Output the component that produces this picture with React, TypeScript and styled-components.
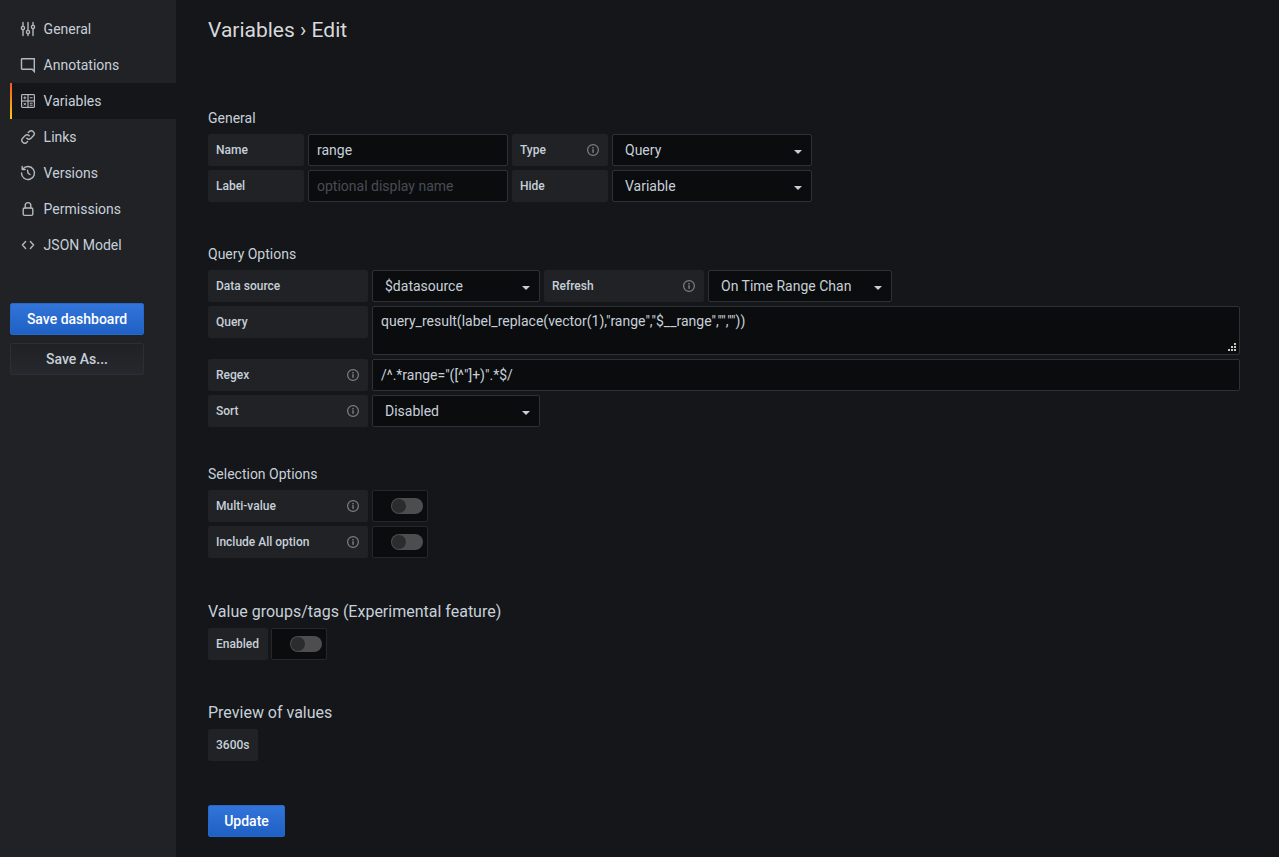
import React from 'react';
import styled, { createGlobalStyle } from 'styled-components';

const Global = createGlobalStyle`
  html, body { margin: 0; padding: 0; background: #141619; }
  body { font-family: Roboto, "Liberation Sans", sans-serif; font-size: 14px; color: #c7d0d9; }
  * { box-sizing: border-box; }
`;

const Page = styled.div`
  display: flex;
  width: 1279px;
  height: 857px;
  overflow: hidden;
`;
const Sidebar = styled.aside`
  width: 176px;
  flex: none;
  background: #202226;
  padding: 11px 0 0 10px;
  display: flex;
  flex-direction: column;
`;
const NavItem = styled.div<{ $active?: boolean }>`
  position: relative;
  height: 36px;
  display: flex;
  align-items: center;
  padding-left: 10px;
  gap: 7.6px;
  font-size: 14px;
  color: #c7d0d9;
  background: ${p => (p.$active ? '#141619' : 'transparent')};
  ${p => p.$active ? `&::before {
    content: '';
    position: absolute;
    left: 0; top: 0; bottom: 0;
    width: 2px;
    background: linear-gradient(180deg, #f05a28 0%, #fbca0a 100%);
  }` : ''}
  svg { width: 16px; height: 16px; flex: none; color: #b3b9c0; }
`;
const SideActions = styled.div`
  margin-top: 40px;
  width: 134px;
  display: flex;
  flex-direction: column;
  gap: 8px;
`;
const PrimaryButton = styled.button<{ $w?: number }>`
  height: 32px;
  width: ${p => (p.$w ? `${p.$w}px` : '100%')};
  border: 1px solid #2668c8;
  border-radius: 2px;
  background: linear-gradient(180deg, #3274d9 0%, #1f60c4 100%);
  color: #fff;
  font: 500 14px Roboto, sans-serif;
  padding: 0;
`;
const SecondaryButton = styled.button`
  height: 32px;
  width: 100%;
  border: 1px solid #2c2e33;
  border-radius: 2px;
  background: linear-gradient(180deg, #1f2125 0%, #26282d 100%);
  color: #c7d0d9;
  font: 500 14px Roboto, sans-serif;
  padding: 0;
`;
const Main = styled.main`
  flex: 1;
  padding: 16px 39px 0 32px;
  display: flex;
  flex-direction: column;
`;
const Title = styled.h2`
  margin: 0;
  font: 400 21px/28px Roboto, sans-serif;
  color: #d8d9da;
  height: 28px;
`;
const SectionTitle = styled.h5<{ $mt: number; $big?: boolean }>`
  margin: ${p => p.$mt}px 0 0;
  font: 400 ${p => (p.$big ? 16 : 14)}px/${p => (p.$big ? 20 : 16)}px Roboto, sans-serif;
  color: #c7d0d9;
  padding-bottom: ${p => (p.$big ? 6 : 8)}px;
`;
const Rows = styled.div`
  display: flex;
  flex-direction: column;
  gap: 4px;
`;
const Row = styled.div`
  display: flex;
  gap: 4px;
`;
const Label = styled.div<{ $w: number }>`
  width: ${p => p.$w}px;
  height: 32px;
  flex: none;
  display: flex;
  align-items: center;
  justify-content: space-between;
  padding: 0 8px;
  background: #202226;
  border-radius: 2px;
  font-size: 12px;
  font-weight: 500;
  color: #c7d0d9;
  svg { width: 14px; height: 14px; color: #7b8087; }
`;
const Input = styled.div<{ $w?: number; $placeholder?: boolean }>`
  width: ${p => (p.$w ? `${p.$w}px` : '100%')};
  height: 32px;
  flex: ${p => (p.$w ? 'none' : 1)};
  display: flex;
  align-items: center;
  padding: 0 8px;
  background: #0b0c0e;
  border: 1px solid #2c3235;
  border-radius: 2px;
  font-size: 14px;
  color: ${p => (p.$placeholder ? '#464c54' : '#c7d0d9')};
`;
const TextArea = styled.div`
  position: relative;
  flex: 1;
  height: 49px;
  padding: 6px 8px;
  background: #0b0c0e;
  border: 1px solid #2c3235;
  border-radius: 2px;
  font-size: 14px;
  line-height: 17px;
  color: #c7d0d9;
  white-space: nowrap;
  svg { position: absolute; right: 2px; bottom: 2px; width: 9px; height: 9px; }
`;
const Select = styled.div<{ $w: number }>`
  width: ${p => p.$w}px;
  height: 32px;
  flex: none;
  display: flex;
  align-items: center;
  justify-content: space-between;
  padding: 0 9px 0 12px;
  background: #0b0c0e;
  border: 1px solid #2c3235;
  border-radius: 2px;
  font-size: 14px;
  color: #c7d0d9;
  &::after {
    content: '';
    width: 0;
    height: 0;
    margin-top: 3px;
    border-left: 4px solid transparent;
    border-right: 4px solid transparent;
    border-top: 4px solid #c7d0d9;
  }
`;
const SwitchBox = styled.div`
  width: 56px;
  height: 32px;
  flex: none;
  display: flex;
  align-items: center;
  justify-content: flex-end;
  padding-right: 4px;
  background: #0b0c0e;
  border: 1px solid #25272b;
  border-radius: 2px;
`;
const Slider = styled.div`
  position: relative;
  width: 32px;
  height: 16px;
  border-radius: 8px;
  background: #4d4d4f;
  &::before {
    content: '';
    position: absolute;
    left: 1px; top: 1px;
    width: 14px; height: 14px;
    border-radius: 50%;
    background: #2b2c2e;
  }
`;
const EnabledRow = styled.div`
  display: flex;
  gap: 3px;
`;
const ButtonSlot = styled.div`
  margin-top: 44px;
`;

const Info = () => (
  <svg viewBox="0 0 14 14" fill="none">
    <circle cx="7" cy="7" r="5.4" stroke="currentColor" strokeWidth="1.2" />
    <rect x="6.3" y="6.2" width="1.4" height="3.6" fill="currentColor" />
    <rect x="6.3" y="4" width="1.4" height="1.4" fill="currentColor" />
  </svg>
);
const Grip = () => (
  <svg viewBox="0 0 9 9" fill="#c8c8c8">
    <rect x="6" y="0" width="2" height="2" />
    <rect x="3" y="3" width="2" height="2" />
    <rect x="6" y="3" width="2" height="2" />
    <rect x="0" y="6" width="2" height="2" />
    <rect x="3" y="6" width="2" height="2" />
    <rect x="6" y="6" width="2" height="2" />
  </svg>
);
const stroke = { fill: 'none', stroke: 'currentColor', strokeWidth: 1.4, strokeLinecap: 'round' as const, strokeLinejoin: 'round' as const };
const GeneralIcon = () => (
  <svg viewBox="0 0 16 16" {...stroke}>
    <path d="M3 1.5v3.5M3 9v5.5M8 1.5v7.5M8 13v1.5M13 1.5v2.5M13 8v6.5" />
    <circle cx="3" cy="7" r="1.6" /><circle cx="8" cy="11" r="1.6" /><circle cx="13" cy="6" r="1.6" />
  </svg>
);
const CommentIcon = () => (
  <svg viewBox="0 0 16 16" {...stroke} strokeLinejoin="miter" strokeLinecap="square">
    <path d="M2.2 1.7h12.1v12.8L12.2 12.3H2.2q-.7 0-.7-.7V2.4q0-.7.7-.7z" />
  </svg>
);
const CalcIcon = () => (
  <svg viewBox="0 0 16 16">
    <rect x="1" y="1" width="14" height="14" rx="1.4" fill="currentColor" />
    <rect x="2.2" y="2.2" width="5.2" height="5.2" fill="#141619" />
    <rect x="8.6" y="2.2" width="5.2" height="5.2" fill="#141619" />
    <rect x="2.2" y="8.6" width="5.2" height="5.2" fill="#141619" />
    <rect x="8.6" y="8.6" width="5.2" height="5.2" fill="#141619" />
    <path d="M3.3 4.8h3M4.8 3.3v3M9.7 4.8h3M3.6 9.9l2.4 2.4M6 9.9l-2.4 2.4M9.7 10.2h3M9.7 12.2h3" stroke="currentColor" strokeWidth="1" fill="none" />
  </svg>
);
const LinkIcon = () => (
  <svg viewBox="0 0 16 16" {...stroke}>
    <path d="M6.8 9.2a3 3 0 0 0 4.2 0l2.6-2.6a3 3 0 0 0-4.2-4.2L8.2 3.6" />
    <path d="M9.2 6.8a3 3 0 0 0-4.2 0L2.4 9.4a3 3 0 0 0 4.2 4.2l1-1" />
  </svg>
);
const HistoryIcon = () => (
  <svg viewBox="0 0 16 16" {...stroke}>
    <path d="M2.9 4A6.5 6.5 0 1 1 1.5 8" />
    <path d="M2.2 1.5v3h3" />
    <path d="M7.6 5.2 8 8.2l2 1.3" />
  </svg>
);
const LockIcon = () => (
  <svg viewBox="0 0 16 16" {...stroke}>
    <rect x="3.2" y="7" width="9.6" height="7.4" rx="1.3" />
    <path d="M5.2 7V4.4a2.8 2.8 0 0 1 5.6 0V7" />
  </svg>
);
const CodeIcon = () => (
  <svg viewBox="0 0 16 16" {...stroke}>
    <path d="M5.6 4.6 2.4 8l3.2 3.4M10.4 4.6 13.6 8l-3.2 3.4" />
  </svg>
);

const nav: [string, React.ReactNode][] = [
  ['General', <GeneralIcon />],
  ['Annotations', <CommentIcon />],
  ['Variables', <CalcIcon />],
  ['Links', <LinkIcon />],
  ['Versions', <HistoryIcon />],
  ['Permissions', <LockIcon />],
  ['JSON Model', <CodeIcon />],
];

export default function App() {
  return (
    <Page>
      <Global />
      <Sidebar>
        {nav.map(([name, icon]) => (
          <NavItem key={name} $active={name === 'Variables'}>
            {icon}
            {name}
          </NavItem>
        ))}
        <SideActions>
          <PrimaryButton>Save dashboard</PrimaryButton>
          <SecondaryButton>Save As...</SecondaryButton>
        </SideActions>
      </Sidebar>
      <Main>
        <Title>Variables › Edit</Title>
        <SectionTitle $mt={66}>General</SectionTitle>
        <Rows>
          <Row>
            <Label $w={96}>Name</Label>
            <Input $w={200}>range</Input>
            <Label $w={96}>Type<Info /></Label>
            <Select $w={200}>Query</Select>
          </Row>
          <Row>
            <Label $w={96}>Label</Label>
            <Input $w={200} $placeholder>optional display name</Input>
            <Label $w={96}>Hide</Label>
            <Select $w={200}>Variable</Select>
          </Row>
        </Rows>
        <SectionTitle $mt={44}>Query Options</SectionTitle>
        <Rows>
          <Row>
            <Label $w={160}>Data source</Label>
            <Select $w={168}>$datasource</Select>
            <Label $w={160}>Refresh<Info /></Label>
            <Select $w={184}>On Time Range Chan</Select>
          </Row>
          <Row>
            <Label $w={160}>Query</Label>
            <TextArea>query_result(label_replace(vector(1),"range","$__range","",""))<Grip /></TextArea>
          </Row>
          <Row>
            <Label $w={160}>Regex<Info /></Label>
            <Input>/^.*range="([^"]+)".*$/</Input>
          </Row>
          <Row>
            <Label $w={160}>Sort<Info /></Label>
            <Select $w={168}>Disabled</Select>
          </Row>
        </Rows>
        <SectionTitle $mt={39}>Selection Options</SectionTitle>
        <Rows>
          <Row>
            <Label $w={160}>Multi-value<Info /></Label>
            <SwitchBox><Slider /></SwitchBox>
          </Row>
          <Row>
            <Label $w={160}>Include All option<Info /></Label>
            <SwitchBox><Slider /></SwitchBox>
          </Row>
        </Rows>
        <SectionTitle $mt={44} $big>Value groups/tags (Experimental feature)</SectionTitle>
        <EnabledRow>
          <Label $w={60}>Enabled</Label>
          <SwitchBox><Slider /></SwitchBox>
        </EnabledRow>
        <SectionTitle $mt={43} $big>Preview of values</SectionTitle>
        <Row>
          <Label $w={50}>3600s</Label>
        </Row>
        <ButtonSlot>
          <PrimaryButton $w={77}>Update</PrimaryButton>
        </ButtonSlot>
      </Main>
    </Page>
  );
}
